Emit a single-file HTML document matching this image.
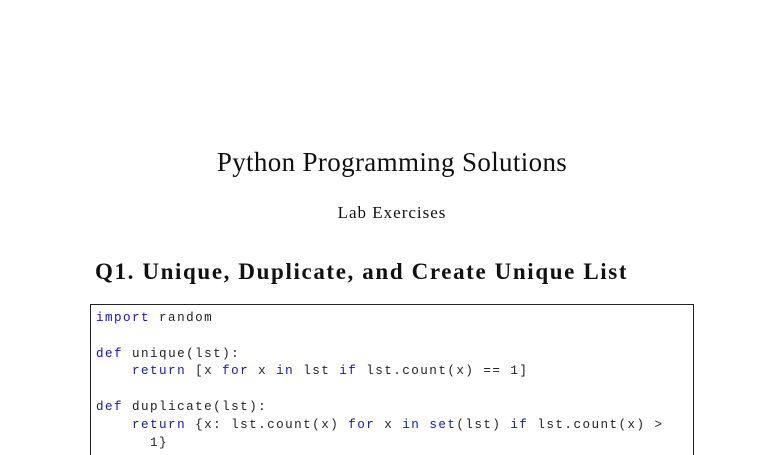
<!DOCTYPE html>
<html><head><style>
body{margin:0;width:784px;height:441px;overflow:hidden;background:#fff;position:relative;font-family:"Liberation Serif",serif;color:#111}
.t{position:absolute;left:0;width:784px;text-align:center}
pre{margin:0;font-family:"Liberation Mono",monospace;font-size:12.6px;line-height:17.8px;letter-spacing:1.45px;color:#222}
.k{color:#1010e0}
</style></head><body>
<div class="t" style="top:147px;font-size:27px;letter-spacing:0.35px">Python Programming Solutions</div>
<div class="t" style="top:203px;font-size:17px;letter-spacing:1px">Lab Exercises</div>
<div style="position:absolute;left:95px;top:259px;font-size:23px;letter-spacing:1.62px;font-weight:bold;white-space:nowrap">Q1. Unique, Duplicate, and Create Unique List</div>
<div style="position:absolute;left:90px;top:304px;width:602px;height:150px;border:1px solid #222;border-bottom:none"></div>
<pre style="position:absolute;left:96px;top:310px"><span class="k">import</span> random

<span class="k">def</span> unique(lst):
    <span class="k">return</span> [x <span class="k">for</span> x <span class="k">in</span> lst <span class="k">if</span> lst.count(x) == 1]

<span class="k">def</span> duplicate(lst):
    <span class="k">return</span> {x: lst.count(x) <span class="k">for</span> x <span class="k">in</span> <span class="k">set</span>(lst) <span class="k">if</span> lst.count(x) &gt;
      1}</pre>
</body></html>
